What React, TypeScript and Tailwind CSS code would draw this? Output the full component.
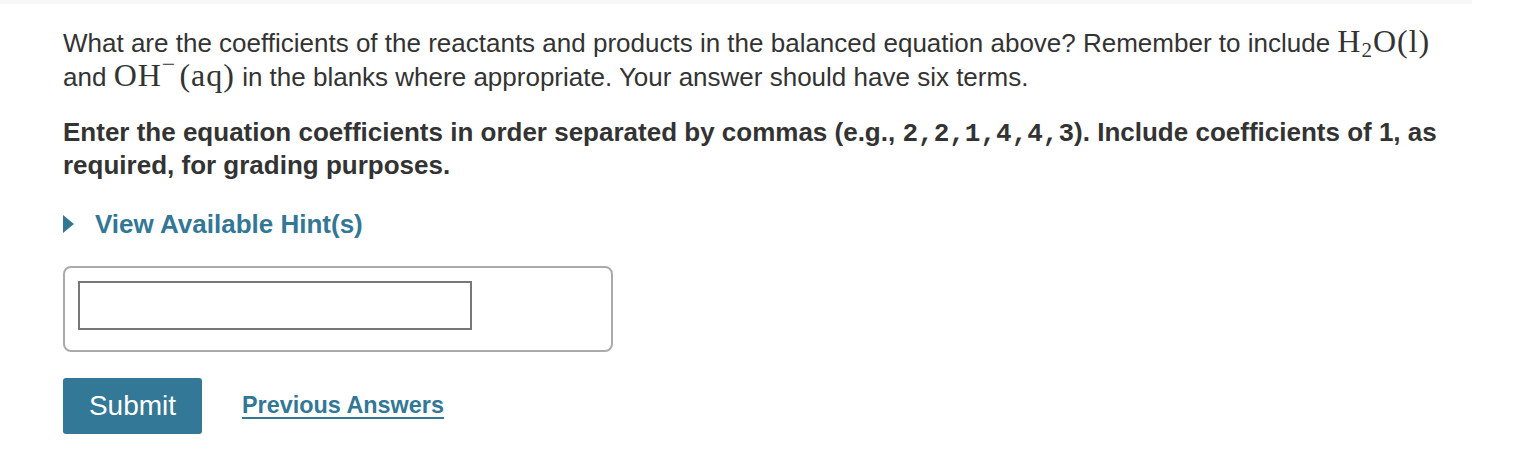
import React from "react";

const serif = "font-['Liberation_Serif',serif]";

export default function App() {
  return (
    <div className="w-[1536px] h-[456px] bg-white font-['Liberation_Sans',Arial,sans-serif] text-[#333333] overflow-hidden">
      <div className="w-[1472px] h-[4px] bg-[#f7f7f7]" />
      <div className="ml-[63px] w-[1412px] pt-[22px]">
        <p className="text-[26px] leading-[34px]">
          What are the coefficients of the reactants and products in the balanced equation above? Remember to include{" "}
          <span className={`${serif} text-[32px] leading-[20px] tracking-[1px]`}>
            H<sub className="text-[21px] leading-none">2</sub>O(l)
          </span>{" "}
          and{" "}
          <span className={`${serif} text-[32px] leading-[20px] tracking-[1px]`}>
            OH<sup className="text-[24px] leading-none align-[2px]">−</sup>
            <span className="ml-[3px]">(aq)</span>
          </span>{" "}
          in the blanks where appropriate. Your answer should have six terms.
        </p>
        <p className="mt-[23px] text-[26px] leading-[31px] font-bold">
          Enter the equation coefficients in order separated by commas (e.g.,{" "}
          <span className="font-['Liberation_Mono',monospace] text-[26px]">2,2,1,4,4,3</span>). Include coefficients of 1, as required, for grading purposes.
        </p>
        <div className="mt-[27px] flex items-center h-[32px]">
          <svg width="11" height="18" viewBox="0 0 11 18">
            <polygon points="0,0 11,9 0,18" fill="#337797" />
          </svg>
          <span className="ml-[21px] text-[26px] font-bold text-[#337797]">View Available Hint(s)</span>
        </div>
        <div className="mt-[26px] w-[550px] h-[86px] border-2 border-[#aaaaaa] rounded-[8px] pt-[13px] pl-[13px]">
          <div className="w-[394px] h-[49px] border-2 border-[#777777] bg-white" />
        </div>
        <div className="mt-[26px] flex items-center">
          <button className="w-[139px] h-[56px] bg-[#337896] rounded-[3px] text-white text-[28px]">
            Submit
          </button>
          <a className="ml-[40px] text-[23.4px] font-bold text-[#337797] underline decoration-2 underline-offset-[4px]">
            Previous Answers
          </a>
        </div>
      </div>
    </div>
  );
}
